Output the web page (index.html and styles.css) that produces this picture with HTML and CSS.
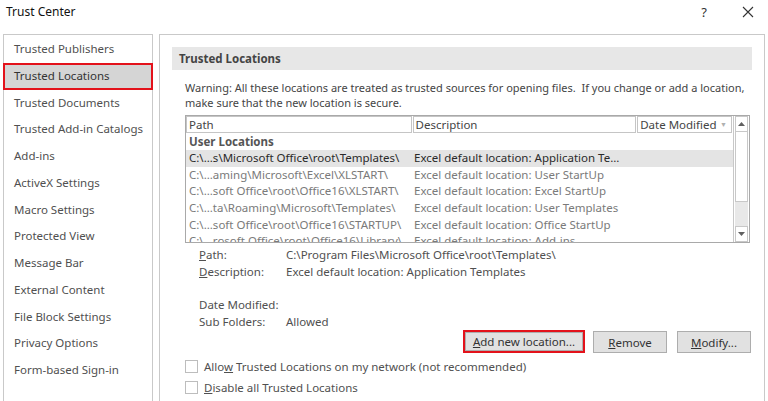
FILE: index.html
```html
<!DOCTYPE html>
<html>
<head>
<meta charset="utf-8">
<link rel="stylesheet" href="styles.css">
</head>
<body>
<div class="titlebar">
  <div class="title">Trust Center</div>
  <div class="controls">
    <span class="help">?</span>
    <svg class="close" width="12" height="12" viewBox="0 0 12 12"><path d="M1 1L11 11M11 1L1 11" stroke="#333" stroke-width="1.1" fill="none"/></svg>
  </div>
</div>
<div class="main">
  <nav class="nav">
    <div class="nav-item">Trusted Publishers</div>
    <div class="nav-item selected">Trusted Locations</div>
    <div class="nav-item">Trusted Documents</div>
    <div class="nav-item">Trusted Add-in Catalogs</div>
    <div class="nav-item">Add-ins</div>
    <div class="nav-item">ActiveX Settings</div>
    <div class="nav-item">Macro Settings</div>
    <div class="nav-item">Protected View</div>
    <div class="nav-item">Message Bar</div>
    <div class="nav-item">External Content</div>
    <div class="nav-item">File Block Settings</div>
    <div class="nav-item">Privacy Options</div>
    <div class="nav-item">Form-based Sign-in</div>
  </nav>
  <section class="panel">
    <div class="section-head">Trusted Locations</div>
    <div class="content">
      <p class="warning">Warning: All these locations are treated as trusted sources for opening files.&nbsp; If you change or add a location,<br>make sure that the new location is secure.</p>
      <div class="table">
        <div class="list">
          <div class="thead">
            <div class="th c1">Path</div>
            <div class="th c2">Description</div>
            <div class="th c3">Date Modified <span class="sort">&#9660;</span></div>
          </div>
          <div class="group">User Locations</div>
          <div class="row sel"><span class="c1">C:\...s\Microsoft Office\root\Templates\</span><span class="c2">Excel default location: Application Te...</span></div>
          <div class="row"><span class="c1">C:\...aming\Microsoft\Excel\XLSTART\</span><span class="c2">Excel default location: User StartUp</span></div>
          <div class="row"><span class="c1">C:\...soft Office\root\Office16\XLSTART\</span><span class="c2">Excel default location: Excel StartUp</span></div>
          <div class="row"><span class="c1">C:\...ta\Roaming\Microsoft\Templates\</span><span class="c2">Excel default location: User Templates</span></div>
          <div class="row"><span class="c1">C:\...soft Office\root\Office16\STARTUP\</span><span class="c2">Excel default location: Office StartUp</span></div>
          <div class="row"><span class="c1">C:\...rosoft Office\root\Office16\Library\</span><span class="c2">Excel default location: Add-ins</span></div>
        </div>
        <div class="scrollbar">
          <div class="sb-btn"><svg width="7" height="4" viewBox="0 0 7 4"><path d="M0 4L3.5 0L7 4Z" fill="#606060"/></svg></div>
          <div class="sb-thumb"></div>
          <div class="sb-track"></div>
          <div class="sb-btn"><svg width="7" height="4" viewBox="0 0 7 4"><path d="M0 0L3.5 4L7 0Z" fill="#606060"/></svg></div>
        </div>
      </div>
      <div class="details">
        <div class="drow"><span class="label"><u>P</u>ath:</span><span>C:\Program Files\Microsoft Office\root\Templates\</span></div>
        <div class="drow"><span class="label"><u>D</u>escription:</span><span>Excel default location: Application Templates</span></div>
        <div class="drow"></div>
        <div class="drow"><span class="label">Date Modified:</span><span></span></div>
        <div class="drow"><span class="label">Sub Folders:</span><span>Allowed</span></div>
      </div>
      <div class="buttons">
        <div class="highlight"><button class="btn btn-add"><u>A</u>dd new location...</button></div>
        <button class="btn btn-remove"><u>R</u>emove</button>
        <button class="btn btn-modify"><u>M</u>odify...</button>
      </div>
      <label class="check"><span class="box"></span><span>Allo<u>w</u> Trusted Locations on my network (not recommended)</span></label>
      <label class="check"><span class="box"></span><span><u>D</u>isable all Trusted Locations</span></label>
    </div>
  </section>
</div>
</body>
</html>
```
FILE: styles.css
```css
* { box-sizing: border-box; }
html, body { margin: 0; padding: 0; }
body {
  width: 768px;
  height: 401px;
  overflow: hidden;
  background: #ffffff;
  font-family: "Noto Sans", "Open Sans", sans-serif;
  font-size: 11.5px;
  color: #444;
}
u { text-decoration: underline; text-underline-offset: 1px; }

.titlebar {
  height: 34px;
  display: flex;
  align-items: flex-start;
  justify-content: space-between;
  padding: 3px 14px 0 6px;
}
.title { color: #111; font-size: 12px; line-height: 18px; }
.controls { display: flex; align-items: center; gap: 35px; height: 18px; }
.help { color: #333; font-size: 13px; }
.close { display: block; }

.main {
  display: flex;
  gap: 6px;
  padding-left: 3px;
  height: 367px;
}
.nav {
  width: 150px;
  border: 1px solid #c9c9c9;
  border-bottom: none;
  padding-top: 1px;
}
.nav-item {
  height: 26.75px;
  line-height: 26.75px;
  padding-left: 10px;
  color: #505050;
  white-space: nowrap;
}
.nav-item.selected {
  margin: 0 -1px;
  border: 2px solid #e3121b;
  background: #d5d5d5;
  line-height: 22.75px;
  padding-left: 9px;
  color: #333;
}

.panel {
  width: 606px;
  border: 1px solid #c9c9c9;
  border-bottom: none;
  padding: 12px 12px 0 12px;
}
.section-head {
  height: 23px;
  line-height: 23px;
  background: #e7e7e7;
  padding-left: 7px;
  font-weight: bold;
  color: #444;
  font-size: 11.5px;
}
.content { padding-left: 13px; }
.warning {
  margin: 10px 0 0 0;
  line-height: 15px;
  white-space: nowrap;
  color: #444;
  font-size: 11px;
}

.table {
  margin-top: 5px;
  width: 565px;
  height: 128px;
  border: 1px solid #a9a9a9;
  display: flex;
  overflow: hidden;
}
.list { flex: 1; overflow: hidden; }
.thead { display: flex; height: 17px; padding-left: 0; }
.th {
  border: 1px solid #c5c5c5;
  height: 17px;
  line-height: 15px;
  padding-left: 2px;
  color: #444;
  margin-right: 1px;
}
.th.c1 { width: 226px; }
.th.c2 { width: 224px; }
.th.c3 { width: 95px; position: relative; }
.sort { position: absolute; right: 4px; top: 0; font-size: 7px; color: #b0b0b0; }
.group {
  height: 17px;
  line-height: 17px;
  font-weight: bold;
  padding-left: 3px;
  color: #555;
}
.row {
  display: flex;
  height: 16.7px;
  line-height: 16.7px;
  color: #7a7a7a;
  white-space: nowrap;
}
.row .c1 { width: 228px; padding-left: 3px; overflow: hidden; }
.row .c2 { padding-left: 0; }
.row.sel { background: #e4e4e4; color: #2a2a2a; }

.scrollbar {
  width: 16px;
  border-left: 1px solid #c8c8c8;
  display: flex;
  flex-direction: column;
  padding: 0 1px;
}
.sb-btn {
  height: 16px;
  display: flex;
  align-items: center;
  justify-content: center;
  border: 1px solid #c8c8c8;
  background: #fff;
}
.sb-thumb {
  height: 70px;
  border: 1px solid #c8c8c8;
  border-top: none;
  background: #fff;
}
.sb-track { flex: 1; background: #e8e8e8; }

.details {
  margin-top: 4px;
  padding-left: 14px;
}
.drow {
  display: flex;
  height: 16.7px;
  line-height: 16.7px;
  color: #505050;
  white-space: nowrap;
}
.label { width: 87px; }

.buttons {
  display: flex;
  justify-content: flex-end;
  gap: 8px;
  margin-top: 1px;
  padding-right: 1px;
  height: 22px;
}
.highlight {
  border: 2px solid #e3121b;
  width: 122px;
  height: 23px;
  margin-top: -1px;
}
.btn {
  font-family: inherit;
  font-size: 11.5px;
  color: #333;
  background: #e1e1e1;
  border: 1px solid #adadad;
  height: 22px;
  padding: 0;
  margin: 0;
}
.btn-add { width: 118px; height: 19px; border-color: #adadad; }
.btn-remove { width: 74px; margin-left: 0; }
.btn-modify { width: 74px; margin-left: 2px; }

.check {
  display: flex;
  align-items: center;
  height: 21px;
  color: #505050;
  white-space: nowrap;
}
.check:first-of-type { margin-top: 3px; }
.box {
  width: 13px;
  height: 13px;
  border: 1px solid #bdbdbd;
  margin-right: 6px;
  background: #fff;
}
```
